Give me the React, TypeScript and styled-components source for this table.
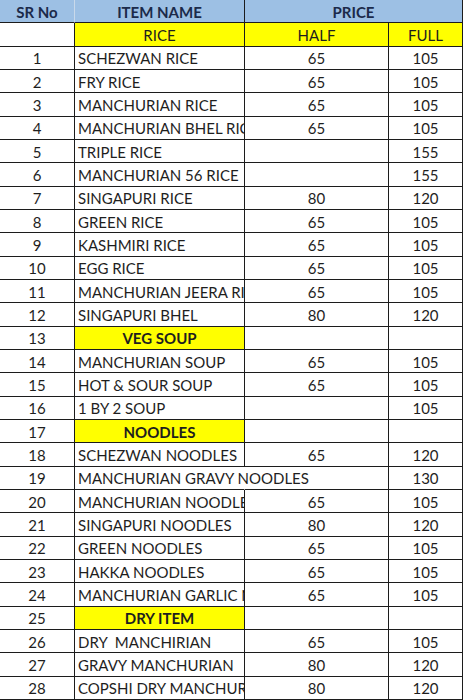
import React from "react";
import styled, { createGlobalStyle } from "styled-components";

type Item = {
  no: number;
  name: string;
  half?: string;
  full?: string;
  category?: boolean;
};

const items: Item[] = [
  { no: 1, name: "SCHEZWAN RICE", half: "65", full: "105" },
  { no: 2, name: "FRY RICE", half: "65", full: "105" },
  { no: 3, name: "MANCHURIAN RICE", half: "65", full: "105" },
  { no: 4, name: "MANCHURIAN BHEL RICE", half: "65", full: "105" },
  { no: 5, name: "TRIPLE RICE", full: "155" },
  { no: 6, name: "MANCHURIAN 56 RICE", full: "155" },
  { no: 7, name: "SINGAPURI RICE", half: "80", full: "120" },
  { no: 8, name: "GREEN RICE", half: "65", full: "105" },
  { no: 9, name: "KASHMIRI RICE", half: "65", full: "105" },
  { no: 10, name: "EGG RICE", half: "65", full: "105" },
  { no: 11, name: "MANCHURIAN JEERA RICE", half: "65", full: "105" },
  { no: 12, name: "SINGAPURI BHEL", half: "80", full: "120" },
  { no: 13, name: "VEG SOUP", category: true },
  { no: 14, name: "MANCHURIAN SOUP", half: "65", full: "105" },
  { no: 15, name: "HOT & SOUR SOUP", half: "65", full: "105" },
  { no: 16, name: "1 BY 2 SOUP", full: "105" },
  { no: 17, name: "NOODLES", category: true },
  { no: 18, name: "SCHEZWAN NOODLES", half: "65", full: "120" },
  { no: 19, name: "MANCHURIAN GRAVY NOODLES", full: "130" },
  { no: 20, name: "MANCHURIAN NOODLES", half: "65", full: "105" },
  { no: 21, name: "SINGAPURI NOODLES", half: "80", full: "120" },
  { no: 22, name: "GREEN NOODLES", half: "65", full: "105" },
  { no: 23, name: "HAKKA NOODLES", half: "65", full: "105" },
  { no: 24, name: "MANCHURIAN GARLIC NOODLES", half: "65", full: "105" },
  { no: 25, name: "DRY ITEM", category: true },
  { no: 26, name: "DRY  MANCHIRIAN", half: "65", full: "105" },
  { no: 27, name: "GRAVY MANCHURIAN", half: "80", full: "120" },
  { no: 28, name: "COPSHI DRY MANCHURIAN", half: "80", full: "120" },
];

const GlobalStyle = createGlobalStyle`
  body {
    margin: 0;
    background: #ffffff;
    font-family: "Lato", "Liberation Sans", sans-serif;
  }
`;

const Sheet = styled.div`
  display: grid;
  grid-template-columns: 75px 170px 144px 74px;
  grid-template-rows: repeat(30, 1fr);
  width: 463px;
  height: 700px;
`;

const Cell = styled.div<{
  $align?: "left" | "center";
  $fill?: string;
  $bold?: boolean;
  $spill?: boolean;
  $span?: number;
  $line?: string;
  $head?: boolean;
}>`
  display: flex;
  align-items: center;
  justify-content: ${(p) => (p.$align === "left" ? "flex-start" : "center")};
  padding: ${(p) => (p.$align === "left" ? "1px 0 0 3px" : "1px 0 0 0")};
  grid-column: ${(p) => (p.$span ? `span ${p.$span}` : "auto")};
  background: ${(p) => p.$fill || "transparent"};
  border-bottom: 1px solid #1c1c1c;
  border-right: 1px solid ${(p) => p.$line || "#1c1c1c"};
  font-size: 15px;
  font-weight: ${(p) => (p.$bold ? 700 : 400)};
  color: ${(p) => (p.$head ? "#1b2a4a" : "#1e1e1e")};
  white-space: pre;
  overflow: ${(p) => (p.$spill ? "visible" : "hidden")};
  min-width: 0;
  position: relative;
  z-index: ${(p) => (p.$spill ? 1 : 0)};
`;

const BLUE = "#9dc0e4";
const YELLOW = "#ffff00";

export default function App() {
  return (
    <>
      <GlobalStyle />
      <Sheet>
        <Cell $fill={BLUE} $bold $head $line="#c9d9ea">SR No</Cell>
        <Cell $fill={BLUE} $bold $head>ITEM NAME</Cell>
        <Cell $fill={BLUE} $bold $head $span={2}>PRICE</Cell>

        <Cell />
        <Cell $fill={YELLOW}>RICE</Cell>
        <Cell $fill={YELLOW}>HALF</Cell>
        <Cell $fill={YELLOW}>FULL</Cell>

        {items.map((it) =>
          it.category ? (
            <React.Fragment key={it.no}>
              <Cell>{it.no}</Cell>
              <Cell $fill={YELLOW} $bold>{it.name}</Cell>
              <Cell />
              <Cell />
            </React.Fragment>
          ) : (
            <React.Fragment key={it.no}>
              <Cell>{it.no}</Cell>
              <Cell
                $align="left"
                $spill={!it.half}
                $line={!it.half && it.name.length > 22 ? "transparent" : undefined}
              >
                {it.name}
              </Cell>
              <Cell>{it.half}</Cell>
              <Cell>{it.full}</Cell>
            </React.Fragment>
          )
        )}
      </Sheet>
    </>
  );
}
